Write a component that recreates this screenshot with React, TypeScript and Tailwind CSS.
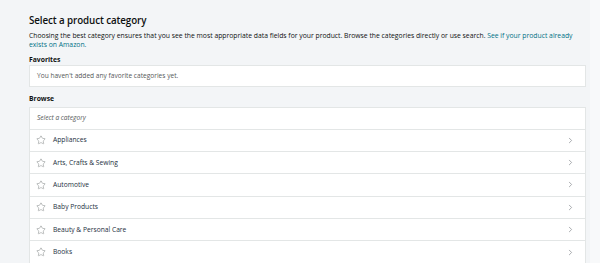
import { Star, ChevronRight } from "lucide-react";

const categories = [
  "Appliances",
  "Arts, Crafts & Sewing",
  "Automotive",
  "Baby Products",
  "Beauty & Personal Care",
  "Books",
];

export default function App() {
  return (
    <div className="flex h-[263px] w-full overflow-hidden bg-[#f3f5f7] text-[#0f1111] [font-family:'Open_Sans',sans-serif]">
      <main className="flex-1 pl-[29px] pr-[4px] pt-[14px]">
        <h1 className="text-[9.8px] font-semibold leading-[14px] tracking-[-0.1px] text-[#0f1111]">
          Select a product category
        </h1>
        <p className="mt-[3px] text-[6.8px] font-medium leading-[9px] text-[#0f1111]">
          Choosing the best category ensures that you see the most appropriate data fields for your product.
          Browse the categories directly or use search.{" "}
          <span className="text-[#007185]">See if your product already exists on Amazon.</span>
        </p>

        {/* favorites */}
        <div className="mt-[5.5px] text-[6.8px] font-bold leading-[10px]">Favorites</div>
        <div className="flex h-[22px] items-center border border-[#e3e6e6] bg-white pl-[7px] text-[6.6px] text-[#565959]">
          You haven't added any favorite categories yet.
        </div>

        {/* browse */}
        <div className="mt-[7px] text-[6.8px] font-bold leading-[10px]">Browse</div>
        <div className="mt-[3px] border border-[#e3e6e6] bg-white">
          <div className="flex h-[21px] items-center pl-[7px] text-[6.6px] italic text-[#565959]">
            Select a category
          </div>
          {categories.map((c) => (
            <div
              key={c}
              className="flex h-[22.4px] items-center border-t border-[#e3e6e6] pl-[6px] pr-[10px]"
            >
              <Star size={10} strokeWidth={1.2} className="text-[#7d8181]" />
              <span className="ml-[7px] flex-1 text-[6.7px] font-medium text-[#232f3e]">{c}</span>
              <ChevronRight size={9} strokeWidth={2} className="text-[#8d9096]" />
            </div>
          ))}
        </div>
      </main>
      <div className="w-[10px] bg-[#f8f9fa]" />
    </div>
  );
}
